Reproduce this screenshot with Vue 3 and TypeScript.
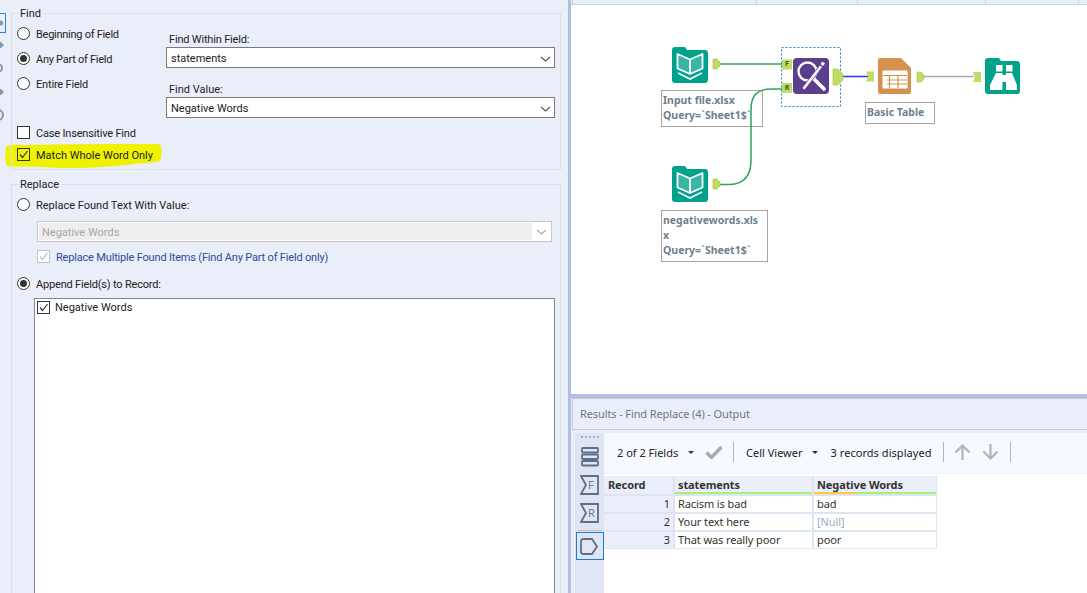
<script setup lang="ts">
interface Row { rec: number; text: string; neg: string; isNull?: boolean }
const rows: Row[] = [
  { rec: 1, text: 'Racism is bad', neg: 'bad' },
  { rec: 2, text: 'Your text here', neg: '[Null]', isNull: true },
  { rec: 3, text: 'That was really poor', neg: 'poor' },
]
</script>

<template>
  <div class="root">
    <section class="config">
      <svg class="strip" width="7" height="130" viewBox="0 0 7 130">
        <rect x="-2" y="13.5" width="7.5" height="19" fill="none" stroke="#2f86d6" />
        <g fill="#8a97a8">
          <circle cx="0.5" cy="23" r="2.6" />
          <path d="M-2 42h3l3 3-3 3h-3z" />
          <path d="M-2 63a5 5 0 0 1 5 5 5 5 0 0 1-5 5v-2a3 3 0 0 0 0-6z" />
          <path d="M-2 89h3l3 3-3 3h-3z" />
          <path d="M-2 109a6 6 0 0 1 6 6 6 6 0 0 1-6 6v-2a4 4 0 0 0 0-8z" />
        </g>
      </svg>
      <svg class="marker" width="160" height="28" viewBox="0 0 160 28">
        <path d="M2 4 C4 1 12 2 22 2 C60 1 110 1 155 1 C158 3 158 8 157 15 C157 20 150 19 130 21 C100 25 60 26 40 24 C20 23 8 24 3 23 C1 20 1 12 2 4Z" fill="#eef200" />
      </svg>
      <div class="forms">
        <fieldset class="group find">
          <legend>Find</legend>
          <div class="find-body">
            <div class="find-left">
              <label class="opt radio-row ls3"><span class="radio"></span>Beginning of Field</label>
              <label class="opt radio-row ls3"><span class="radio on"></span>Any Part of Field</label>
              <label class="opt radio-row ls2"><span class="radio"></span>Entire Field</label>
              <label class="opt check-row first-check ls2"><span class="check"></span>Case Insensitive Find</label>
              <label class="opt check-row"><span class="check clear">
                <svg width="11" height="11" viewBox="0 0 11 11"><path d="M2 5.5l2.5 3L9.5 2" fill="none" stroke="#333" stroke-width="1.2" /></svg>
              </span>Match Whole Word Only</label>
            </div>
            <div class="find-right">
              <div class="field-label top ls2">Find Within Field:</div>
              <div class="select"><span>statements</span>
                <svg width="11" height="6" viewBox="0 0 11 6"><path d="M1 1l4.5 4L10 1" fill="none" stroke="#555" stroke-width="1.1" /></svg>
              </div>
              <div class="field-label">Find Value:</div>
              <div class="select"><span>Negative Words</span>
                <svg width="11" height="6" viewBox="0 0 11 6"><path d="M1 1l4.5 4L10 1" fill="none" stroke="#555" stroke-width="1.1" /></svg>
              </div>
            </div>
          </div>
        </fieldset>

        <fieldset class="group replace">
          <legend>Replace</legend>
          <label class="opt radio-row"><span class="radio"></span>Replace Found Text With Value:</label>
          <div class="select disabled"><span>Negative Words</span>
            <i><svg width="11" height="6" viewBox="0 0 11 6"><path d="M1 1l4.5 4L10 1" fill="none" stroke="#aaa" stroke-width="1.1" /></svg></i>
          </div>
          <label class="opt multi ls2"><span class="check off">
            <svg width="11" height="11" viewBox="0 0 11 11"><path d="M2 5.5l2.5 3L9.5 2" fill="none" stroke="#bbb" stroke-width="1.2" /></svg>
          </span>Replace Multiple Found Items (Find Any Part of Field only)</label>
          <label class="opt radio-row append ls2"><span class="radio on"></span>Append Field(s) to Record:</label>
          <div class="listbox">
            <label class="opt list-item"><span class="check">
              <svg width="11" height="11" viewBox="0 0 11 11"><path d="M2 5.5l2.5 3L9.5 2" fill="none" stroke="#333" stroke-width="1.2" /></svg>
            </span>Negative Words</label>
          </div>
        </fieldset>
      </div>
    </section>

    <div class="vsplit"></div>

    <section class="right">
      <div class="canvas">
        <div class="tabs">
          <span class="tab t1"></span><span class="tab t2"></span><span class="tab t3"></span><span class="tab t4"></span><span class="tab t5"></span>
        </div>
        <div class="note n1">Input file.xlsx<br />Query=`Sheet1$`</div>
        <div class="note n2">Basic Table</div>
        <div class="note n3">negativewords.xls<br />x<br />Query=`Sheet1$`</div>
        <svg class="wires" width="516" height="394" viewBox="571 0 516 394">
          <defs>
            <g id="book">
              <path d="M0 3a3 3 0 0 1 3-3h10l2 3h18a3 3 0 0 1 3 3v27a3 3 0 0 1-3 3H3a3 3 0 0 1-3-3z" fill="#00a28c" />
              <path d="M5.500 7l12.500 5.500 12.500-5.500v14.500L18 27 5.500 21.500zM18 12.500V27" fill="#fff" fill-opacity=".22" stroke="#fff" stroke-width="1.8" stroke-linejoin="round" />
              <path d="M6 26l12 6 12-6" fill="none" stroke="#fff" stroke-width="1.6" />
            </g>
            <path id="anchor-out" d="M0 0h4l3 3v4l-3 3H0z" fill="#bfdc64" stroke="#a3c44a" stroke-width=".6" />
            <path id="anchor-in" d="M0 0h8v10H0l2-5z" fill="#bfdc64" />
          </defs>
          <path d="M720 64H782" fill="none" stroke="#2fa35c" stroke-width="1.5" />
          <path d="M720 184.500H730C745 184 751 175 751 160V110C751 95 757 89 772 89H783" fill="none" stroke="#2fa35c" stroke-width="1.5" />
          <path d="M843 76.500H868" stroke="#3a3ae0" stroke-width="1.6" />
          <path d="M923 76.500H974" stroke="#ababab" stroke-width="1.6" />

          <use href="#book" x="672" y="47" />
          <use href="#anchor-out" x="713" y="59" />
          <use href="#book" x="672" y="166" />
          <use href="#anchor-out" x="713" y="179" />

          <rect x="781.500" y="47.500" width="59" height="59" fill="none" stroke="#1d7fd0" stroke-dasharray="2 2" />
          <rect x="782" y="59.500" width="10" height="10" fill="#bfdc64" />
          <rect x="782" y="83" width="10" height="10" fill="#bfdc64" />
          <rect x="793" y="58" width="36" height="36" rx="4" fill="#5c3f8c" />
          <circle cx="807.500" cy="71.500" r="9" fill="none" stroke="#fff" stroke-width="2.400" />
          <path d="M814 79l10 10" stroke="#fff" stroke-width="3.600" stroke-linecap="round" />
          <path d="M802 88l18-23 2.500 2-18 23z" fill="#fff" stroke="#5c3f8c" stroke-width=".8" />
          <path d="M820.500 64l2-2.500 2.500 2-2 2.500z" fill="#fff" />
          <path d="M833 69h5l5 5v6l-5 5h-5z" fill="#bfdc64" stroke="#a3c44a" stroke-width=".6" />

          <use href="#anchor-in" x="866" y="71.500" />
          <path d="M878 60a2 2 0 0 1 2-2h21l10 10v24a2 2 0 0 1-2 2h-29a2 2 0 0 1-2-2z" fill="#d6914f" />
          <rect x="882.500" y="70.500" width="25" height="18" rx="1" fill="#fff" />
          <path d="M883 75.500h24M887 80h20M887 84h20M889.500 75v13M898 75v13" stroke="#d6914f" stroke-width="1.2" fill="none" />
          <use href="#anchor-out" x="917" y="72" />
          <use href="#anchor-in" x="973" y="72" />
          <path d="M985 61a3 3 0 0 1 3-3h11l2 3h16a3 3 0 0 1 3 3v27a3 3 0 0 1-3 3h-29a3 3 0 0 1-3-3z" fill="#00a28c" />
          <path d="M996 65h6.500v6.500H996zM1006 65h6.500v6.500H1006z" fill="#fff" />
          <path d="M996 73h6.500v17H990v-5zM1012 73h-6v17h11v-5z" fill="#fff" />
          <rect x="1002" y="75" width="4.500" height="7" fill="#fff" />
        </svg>
        <span class="pin pf">F</span>
        <span class="pin pr">R</span>
      </div>

      <div class="hsplit"></div>

      <div class="results">
        <div class="title">Results - Find Replace (4) - Output</div>
        <div class="results-body">
          <aside class="side">
            <div class="grip"></div>
            <svg class="side-icon first" width="18" height="20" viewBox="0 0 18 20">
              <g fill="none" stroke="#5d6f8a" stroke-width="1.8">
                <rect x="1" y="1" width="16" height="4.500" rx="1" /><rect x="1" y="7.500" width="16" height="4.500" rx="1" /><rect x="1" y="14" width="16" height="4.500" rx="1" />
              </g>
            </svg>
            <div class="side-letter">
              <svg width="19" height="20" viewBox="0 0 19 20"><path d="M1 1H18V19H1l5-9z" fill="none" stroke="#5d6f8a" stroke-width="1.800" /></svg>
              <span>F</span>
            </div>
            <div class="side-letter">
              <svg width="19" height="20" viewBox="0 0 19 20"><path d="M1 1H18V19H1l5-9z" fill="none" stroke="#5d6f8a" stroke-width="1.800" /></svg>
              <span>R</span>
            </div>
            <div class="side-sep"></div>
            <div class="side-active">
              <svg width="19" height="17" viewBox="0 0 19 17"><path d="M3 1h9l5 7.500-5 7.500H3a2 2 0 0 1-2-2V3a2 2 0 0 1 2-2z" fill="none" stroke="#5d6f8a" stroke-width="1.8" /></svg>
            </div>
          </aside>
          <div class="main">
            <div class="toolbar">
              <span class="tb fields">2 of 2 Fields</span>
              <span class="caret c1"></span>
              <svg class="tick" width="18" height="14" viewBox="0 0 18 14"><path d="M1.500 7.500l5 5L16.500 2" fill="none" stroke="#a9a9a9" stroke-width="3.400" /></svg>
              <span class="sep s1"></span>
              <span class="tb">Cell Viewer</span>
              <span class="caret c2"></span>
              <span class="tb count">3 records displayed</span>
              <span class="sep s2"></span>
              <svg class="arrow up" width="17" height="16" viewBox="0 0 17 16"><path d="M8.500 16V2M1.500 8.500l7-7 7 7" fill="none" stroke="#b3b3b3" stroke-width="2.200" /></svg>
              <svg class="arrow down" width="17" height="16" viewBox="0 0 17 16"><path d="M8.500 0v14M1.500 7.500l7 7 7-7" fill="none" stroke="#b3b3b3" stroke-width="2.200" /></svg>
              <span class="sep s3"></span>
            </div>
            <div class="table">
              <div class="th plain">Record</div>
              <div class="th green">statements</div>
              <div class="th green neg">Negative Words<i></i></div>
              <template v-for="r in rows" :key="r.rec">
                <div class="td num">{{ r.rec }}</div>
                <div class="td">{{ r.text }}</div>
                <div class="td" :class="{ nullish: r.isNull }">{{ r.neg }}</div>
              </template>
            </div>
          </div>
        </div>
      </div>
    </section>
  </div>
</template>

<style>
html, body { margin: 0; padding: 0; overflow: hidden; }
</style>

<style scoped>
.root {
  display: grid;
  grid-template-columns: 568px 3px 1fr;
  width: 1087px;
  height: 593px;
  overflow: hidden;
  font-family: "Noto Sans", "Open Sans", sans-serif;
  font-size: 11px;
  color: #222;
  background: #e9eef9;
}
.config {
  position: relative;
  display: flex;
  height: 593px;
  overflow: hidden;
  font-family: Roboto, "Noto Sans", sans-serif;
}
.strip { flex: none; width: 7px; height: 130px; overflow: visible; }
.marker { position: absolute; left: 4px; top: 143px; }
.forms { position: relative; margin-left: 4px; padding-top: 5px; width: 550px; }
.group {
  box-sizing: border-box;
  margin: 0;
  width: 550px;
  padding: 0 5px;
  border: 1px solid #dcdfe3;
  min-width: 0;
}
.group legend { padding: 0 2px; margin-left: 1px; height: 16px; line-height: 18px; font-size: 11px; }
.find { height: 165px; }
.replace { margin-top: 6px; height: 440px; }
.find-body { display: flex; }
.find-left { width: 149px; flex: none; }
.find-right { flex: 1; }
.ls2 { letter-spacing: -0.18px; }
.ls3 { letter-spacing: -0.27px; }
.opt { display: flex; align-items: center; white-space: nowrap; box-sizing: border-box; padding-top: 2px; }
.radio-row { height: 24px; margin-bottom: 1px; }
.check-row { height: 22px; }
.first-check { margin-top: 26px; }
.radio, .check {
  flex: none;
  box-sizing: border-box;
  width: 13px;
  height: 13px;
  margin-right: 6px;
  margin-top: -2px;
  border: 1px solid #333;
  background: #fff;
  display: flex;
  align-items: center;
  justify-content: center;
}
.radio { border-radius: 50%; }
.radio.on::after { content: ""; width: 7px; height: 7px; border-radius: 50%; background: #333; }
.check.clear { background: transparent; }
.check.off { border-color: #c4c4c4; }
.field-label { margin-top: 13px; padding-left: 3px; line-height: 18px; height: 16px; }
.field-label.top { margin-top: 10px; }
.select {
  box-sizing: border-box;
  height: 21px;
  display: flex;
  align-items: center;
  justify-content: space-between;
  padding: 2px 3px 0 4px;
  border: 1px solid #7a7a7a;
  background: #fff;
}
.select.disabled {
  width: 515px;
  margin: 5px 0 0 20px;
  padding: 1px;
  border-color: #c6c6c6;
  color: #a8a8a8;
  align-items: stretch;
}
.select.disabled span { flex: 1; background: #eee; padding: 1px 0 0 3px; line-height: 17px; }
.select.disabled i { width: 18px; display: flex; align-items: center; justify-content: center; }
.multi { height: 20px; margin: 4px 0 0 20px; color: #2a4a9c; }
.append { margin-top: 5px; margin-bottom: 3px; }
.listbox {
  box-sizing: border-box;
  margin-left: 17px;
  width: 521px;
  height: 320px;
  border: 1px solid #7f8890;
  background: #fff;
  padding: 2px;
}
.list-item { height: 13px; padding-top: 0; }
.list-item .check { margin-right: 5px; margin-top: 0; }

.vsplit { background: #afc0e4; }
.right { display: flex; flex-direction: column; height: 593px; min-width: 0; }
.canvas { position: relative; height: 394px; background: #fff; flex: none; }
.tabs { display: flex; height: 4px; background: #e9eef9; border-bottom: 1px solid #c5d2ea; }
.tab { border-right: 1px solid #c5d2ea; }
.t1 { width: 1px; }
.t2 { width: 183px; }
.t3 { width: 100px; }
.t4 { width: 127px; }
.t5 { width: 92px; }
.wires { position: absolute; left: 0; top: 0; }
.note {
  position: absolute;
  box-sizing: border-box;
  border: 1px solid #a5a5a5;
  background: #fff;
  color: #6f7f8f;
  font-weight: 700;
  font-size: 10.5px;
  line-height: 15px;
  padding: 2px 1px;
  white-space: nowrap;
}
.n1 { left: 90px; top: 90px; width: 102px; height: 37px; }
.n2 { left: 294px; top: 102px; width: 70px; height: 22px; }
.n3 { left: 90px; top: 210px; width: 107px; height: 52px; }
.pin { position: absolute; font-size: 7px; font-weight: 700; line-height: 10px; width: 10px; text-align: center; color: #3a5a2a; left: 211px; }
.pf { top: 59px; }
.pr { top: 83px; }

.hsplit { flex: none; height: 4px; background: #afc0e4; }
.results { flex: 1; display: flex; flex-direction: column; min-height: 0; }
.title {
  box-sizing: border-box;
  flex: none;
  height: 32px;
  margin-left: 1px;
  padding-left: 7px;
  line-height: 30px;
  color: #6b7889;
  letter-spacing: -0.11px;
  border: 1px solid #c8c9cc;
  border-right: none;
}
.results-body { flex: 1; display: flex; padding: 3px 0 0 4px; min-height: 0; }
.side {
  flex: none;
  width: 29px;
  box-sizing: border-box;
  background: #dfe5f2;
  display: flex;
  flex-direction: column;
  align-items: center;
  position: relative;
}
.grip { width: 18px; margin-top: 3px; height: 2px; border-top: 2px dotted #a7aebb; }
.side-icon.first { margin-top: 7px; }
.side-letter { position: relative; margin-top: 8px; height: 20px; width: 19px; }
.side-letter span { position: absolute; left: 8px; top: 1px; color: #6a7a90; font-size: 11px; line-height: 18px; }
.side-sep { width: 24px; height: 1px; margin-top: 7px; background: #b9bfcb; }
.side-active {
  box-sizing: border-box;
  width: 28px;
  height: 28px;
  margin-top: 1px;
  border: 1px solid #1e7bd0;
  display: flex;
  align-items: center;
  justify-content: center;
}
.main { flex: 1; min-width: 0; background: #fff; margin-left: 0; }
.toolbar {
  height: 41px;
  background: #f6f9ff;
  display: flex;
  align-items: center;
  padding: 0 0 2px 13px;
  box-sizing: border-box;
  border-bottom: 1px solid #eef1f6;
}
.tb { color: #222; white-space: nowrap; }
.fields { width: 71px; }
.caret { width: 0; height: 0; border-left: 3px solid transparent; border-right: 3px solid transparent; border-top: 3px solid #333; }
.c1 { margin-right: 11px; }
.c2 { margin: 0 13px 0 9px; }
.count { letter-spacing: 0.05px; }
.tick { margin-right: 10px; }
.sep { width: 1px; height: 20px; background: #b5b5b5; }
.s1 { margin-right: 12px; }
.s2 { margin: 0 10px 0 11px; }
.s3 { margin-left: 11px; }
.arrow.up { margin-right: 11px; }
.table {
  display: grid;
  grid-template-columns: 69px 137px 122px;
  grid-template-rows: 18px repeat(3, 16px);
  gap: 2px;
  width: 332px;
  margin-top: 2px;
  padding: 0 1px 1px 0;
  background: #dde5f2;
  letter-spacing: -0.1px;
}
.th {
  position: relative;
  background: #e9eef9;
  font-weight: 700;
  line-height: 18px;
  padding-left: 3px;
  color: #333;
}
.th.plain { padding-left: 4px; }
.th.green { border-bottom: 2px solid #a6f07a; box-sizing: border-box; line-height: 17px; }
.neg i { position: absolute; left: 0; bottom: -2px; width: 40px; height: 2px; background: #ffc933; }
.td { background: #fff; line-height: 16px; padding-left: 3px; color: #333; }
.td.num { background: #e9eef9; text-align: right; padding: 0 3px 0 0; }
.nullish { color: #a3a8c4; }
</style>
